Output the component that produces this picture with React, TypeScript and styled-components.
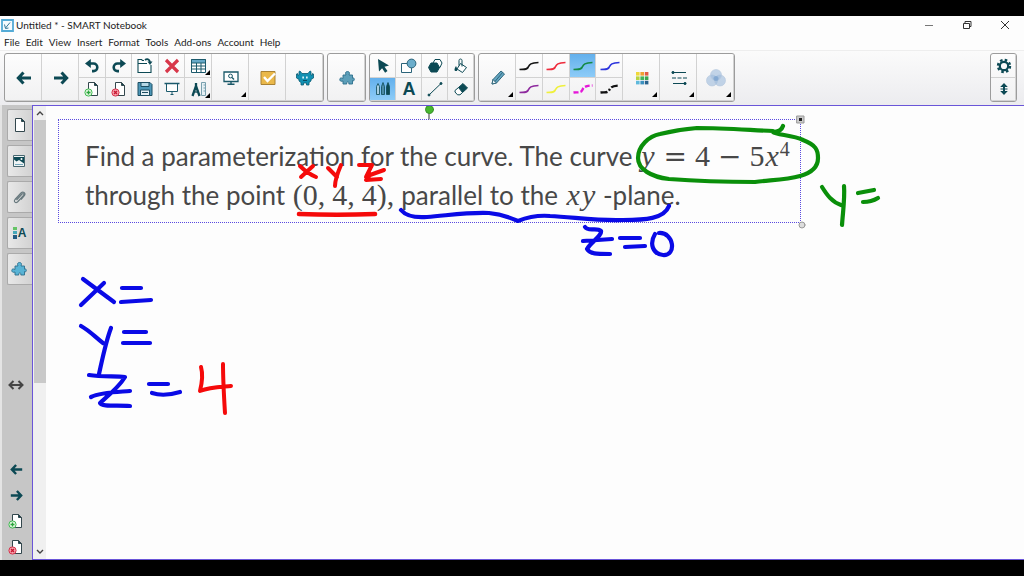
import React from "react";
import styled, { createGlobalStyle } from "styled-components";

const TEAL = "#0c4954";
const BLUE_INK = "#0a0ae6";
const RED_INK = "#f50a0a";
const GREEN_INK = "#0a8f0a";

const GlobalStyle = createGlobalStyle`
  * { box-sizing: border-box; }
  body { margin: 0; background: #000; font-family: Lato, "Open Sans", sans-serif; }
  button { font: inherit; color: inherit; border: 0; padding: 0; background: none; }
  svg { display: block; flex: none; }
`;

const Screen = styled.div`
  display: flex;
  flex-direction: column;
  min-height: 100vh;
  padding: 16px 0;
  background: #000;
`;

const AppWindow = styled.div`
  display: flex;
  flex: 1;
  flex-direction: column;
  background: #fdfdfd;
`;

const TitleBar = styled.header`
  display: flex;
  align-items: center;
  height: 18px;
  padding-left: 1px;
`;

const Title = styled.h1`
  flex: 1;
  margin: 0 0 0 2px;
  font-size: 10px;
  line-height: 18px;
  font-weight: 400;
  color: #222;
`;

const WindowButton = styled.button`
  display: flex;
  align-items: center;
  justify-content: center;
  width: 38px;
  height: 18px;
`;

const MenuBar = styled.nav`
  display: flex;
  gap: 6px;
  height: 17px;
  padding-left: 4px;
  border-bottom: 1px solid #eee;
`;

const MenuItem = styled.button`
  font-size: 10px;
  line-height: 16px;
  color: #222;
`;

const Toolbar = styled.div`
  display: flex;
  gap: 3px;
  padding: 2px 7px 3px 4px;
  background: linear-gradient(#fbfbfb, #ececef);
`;

const Group = styled.div`
  display: flex;
  height: 49px;
  border: 1px solid #9c9c9c;
  border-radius: 3px;
  overflow: hidden;
  background: linear-gradient(#fdfdfd, #f1f1f2);
`;

const Spacer = styled.div<{ $weight?: number }>`
  flex: ${(p) => p.$weight ?? 1};
`;

const ToolButton = styled.button<{ $active?: boolean }>`
  position: relative;
  display: flex;
  align-items: center;
  justify-content: center;
  min-width: 0;
  background: ${(p) => (p.$active ? "linear-gradient(#63b0ec, #8fcdf8)" : "none")};
  box-shadow: inset -1px -1px 0 #d2d2d2;
`;

const LargeTool = styled(ToolButton)`
  width: 37px;
  height: 100%;
`;

const ToolGrid = styled.div<{ $columns: number; $width: number }>`
  display: grid;
  grid-template-columns: repeat(${(p) => p.$columns}, 1fr);
  grid-template-rows: 1fr 1fr;
  width: ${(p) => p.$width}px;
`;

const MoreCorner = styled.i<{ $tight?: boolean }>`
  position: absolute;
  right: ${(p) => (p.$tight ? 2 : 3)}px;
  bottom: ${(p) => (p.$tight ? 3 : 4)}px;
  border-left: 5px solid transparent;
  border-bottom: 5px solid #000;
`;

const Workspace = styled.div`
  display: flex;
  flex: 1;
`;

const SideRail = styled.aside`
  display: flex;
  flex-direction: column;
  width: 32px;
  padding-top: 4px;
  border-left: 2px solid #e4e4e4;
  background: #c6c6c6;
`;

const TabList = styled.div`
  display: flex;
  flex-direction: column;
  gap: 4px;
  padding-left: 5px;
`;

const SideTab = styled.button`
  display: flex;
  align-items: center;
  justify-content: center;
  height: 32px;
  padding-right: 2px;
  border: 1px solid #aaa;
  border-right: 0;
  border-radius: 2px 0 0 2px;
  background: linear-gradient(90deg, #e8e8e8, #d2d2d2);
`;

const RailButton = styled.button`
  display: flex;
  align-items: center;
  justify-content: center;
  height: 26px;
  padding-right: 2px;
`;

const PageArea = styled.main`
  display: flex;
  flex: 1;
  min-width: 0;
  border: 1px solid #6a55d8;
  border-right: 0;
  background: #fdfdfd;
`;

const ScrollTrack = styled.div`
  display: flex;
  flex-direction: column;
  width: 13px;
  background: #f0f0f0;
`;

const ScrollThumb = styled.div`
  flex: 264;
  margin-left: 1px;
  background: #c9c9c9;
`;

const ScrollRest = styled.div`
  flex: 162;
`;

const ScrollButton = styled.button`
  display: flex;
  align-items: center;
  justify-content: center;
  height: 14px;
`;

const Canvas = styled.div`
  position: relative;
  flex: 1;
  min-width: 0;
  padding: 13px 12px;
  overflow: hidden;
`;

const Problem = styled.div`
  width: 743px;
  height: 104px;
  padding: 17px 0 0 26px;
  border: 1px dotted #5a4ae0;
`;

const ProblemText = styled.p`
  margin: 0;
  font-family: Lato, sans-serif;
  font-size: 26px;
  line-height: 39px;
  white-space: nowrap;
  color: #484848;
`;

const MathText = styled.span`
  margin-left: 1px;
  font-family: "Liberation Serif", serif;
  font-size: 30px;
  line-height: 1;

  sup {
    font-size: 20px;
    line-height: 1;
    vertical-align: 10px;
  }
`;

const Operator = styled.span`
  margin: 0 8px;
  font-family: "DejaVu Serif", serif;
  font-size: 28px;
  line-height: 1;
`;

const Comma = styled.span`
  margin-right: 7px;
`;

const Variable = styled.i`
  margin: 0 1px;
`;

const Ink = styled.svg`
  position: absolute;
  top: 0;
  left: 0;
`;

const BackIcon = ({ size = 16, color = TEAL }) => (
  <svg width={size} height={size} viewBox="0 0 16 16" fill="none" stroke={color} strokeWidth="3">
    <path d="M2 8h13M7.500 2.500 2.300 8l5.200 5.500" />
  </svg>
);

const ForwardIcon = ({ size = 16, color = TEAL }) => (
  <svg width={size} height={size} viewBox="0 0 16 16" fill="none" stroke={color} strokeWidth="3">
    <path d="M1 8h13M8.500 2.500 13.700 8l-5.200 5.500" />
  </svg>
);

const UndoIcon = () => (
  <svg width="16" height="16" viewBox="0 0 16 16" fill="none" stroke={TEAL} strokeWidth="2.600">
    <path d="M3 5.500h6.500a3.800 3.800 0 0 1 0 7.600H8" />
    <path d="M6.800 1 1 5.500l5.800 4.500z" fill={TEAL} stroke="none" />
  </svg>
);

const RedoIcon = () => (
  <svg width="16" height="16" viewBox="0 0 16 16" fill="none" stroke={TEAL} strokeWidth="2.600">
    <path d="M13 5.500H6.500a3.800 3.800 0 0 0 0 7.600H8" />
    <path d="m9.200 1 5.800 4.500L9.200 10z" fill={TEAL} stroke="none" />
  </svg>
);

const OpenIcon = () => (
  <svg width="18" height="18" viewBox="0 0 18 18" fill="none" stroke={TEAL} strokeWidth="1.100">
    <path d="M8 3.500H6.500L5.500 2.500H2v13h13V8" fill="#fff" />
    <path d="M2 6.500h9" />
    <path d="M9 3c2-1.500 4.500-1 5 2" strokeWidth="1.800" />
    <path d="M11.500 4.500h5L14 8z" fill={TEAL} stroke="none" />
  </svg>
);

const DeleteIcon = () => (
  <svg width="16" height="16" viewBox="0 0 16 16" fill="none" stroke="#d8374a" strokeWidth="3.200">
    <path d="m2 2 12 12M14 2 2 14" />
  </svg>
);

const TableIcon = () => (
  <svg width="16" height="16" viewBox="0 0 16 16" fill="#fff" stroke="#1c5a6c">
    <path d="M.5 1.500h14v13H.5z" />
    <path d="M.5 1.500h14v3.500H.5z" fill="#67a9c8" />
    <path d="M.5 8h14M.5 11h14M5.500 5v9.500M10 5v9.500" />
  </svg>
);

const PageIcon = ({ badge }: { badge?: "add" | "remove" }) => (
  <svg width="16" height="18" viewBox="0 0 16 18" fill="#fff" stroke="#33474d">
    <path d="M4.500 2.500h6l3 3v10h-9z" />
    <path d="M10.500 2.500v3h3z" fill={TEAL} />
    {badge && (
      <>
        <circle cx="4.500" cy="12.500" r="3.600" fill={badge === "add" ? "#e7f8e4" : "#f6a5ae"} stroke={badge === "add" ? "#3eba50" : "#d72f49"} />
        <path
          d={badge === "add" ? "M4.500 10.500v4M2.500 12.500h4" : "m3 11 3 3M6 11l-3 3"}
          stroke={badge === "add" ? "#2aa53c" : "#c81531"}
          strokeWidth="1.300"
        />
      </>
    )}
  </svg>
);

const SaveIcon = () => (
  <svg width="16" height="16" viewBox="0 0 16 16" fill="#4e97b8" stroke="#1c4e62">
    <path d="M1 1.500h12l2 2v11H1z" />
    <path d="M4 1.500h8v4H4z" fill="#b7d8e6" />
    <path d="M3.500 9h9v5.500h-9z" fill="#e4eff4" />
    <path d="M5 11.500h6" />
  </svg>
);

const ShadeIcon = () => (
  <svg width="16" height="16" viewBox="0 0 16 16" fill="#fff" stroke="#1c5a6c">
    <path d="M2.500 2.500h11v8h-11z" />
    <path d="M.5 2.500h15" strokeWidth="1.600" />
    <path d="M8 10.500V14M6.500 13.500h3" />
  </svg>
);

const MeasureIcon = () => (
  <svg width="18" height="18" viewBox="0 0 18 18" fill="none" stroke={TEAL}>
    <path d="M6 3v3L2.500 16M6 6l3.500 10" strokeWidth="2.300" />
    <path d="M3.500 11c2 1.500 3.500 1.500 5 0" strokeWidth="1.200" />
    <path d="M11.500 2.500h4v13h-4z" fill="#e6f0f4" stroke="#79a0ae" />
    <path d="M13.500 5h2M13.500 8h2M13.500 11h2" stroke="#79a0ae" />
  </svg>
);

const ScreenIcon = () => (
  <svg width="16" height="16" viewBox="0 0 16 16" fill="#fff" stroke="#1a5868">
    <path d="M1 2h14v9.500H1z" strokeWidth="1.300" />
    <circle cx="7.500" cy="6" r="1.900" />
    <path d="m9 7.500 2 2M8 11.500V14M4.500 14.300h7" strokeWidth="1.400" />
  </svg>
);

const CheckIcon = () => (
  <svg width="16" height="16" viewBox="0 0 16 16" fill="#eab84a" stroke="#a98235">
    <path d="M1 1.500h14v13H1z" />
    <path d="m4 7 3.500 4L15 3.500" fill="none" stroke="#fff" strokeWidth="2.400" />
  </svg>
);

const MonsterIcon = () => (
  <svg width="18" height="16" viewBox="0 0 18 16">
    <path
      d="M4 1l2 2.500h6L14 1l1 .5V5h1.500V3.500L17.500 4v4L15 9.500V11l-2 1.500V15h-2.500v-2h-3v2H5v-2.500L3 11V9.500L.5 8V4l1-.5V5H3V1.500z"
      fill="#1290b2"
      stroke="#0a5c74"
      strokeWidth=".8"
    />
    <path d="M6.300 6.500h1.700v2H6.300zM10 6.500h1.700v2H10z" fill="#d8f3fa" />
    <path d="M7 10.500h4" stroke="#084b60" />
  </svg>
);

const PuzzleIcon = ({ fill = "#5d9fb9" }) => (
  <svg width="16" height="16" viewBox="0 0 16 16" fill={fill} stroke="#2c6f8d" strokeWidth=".9">
    <path d="M4 5h3C6 3 6.500 1.500 8.500 1.500S11 3 10 5h3.500v3.200c1.500-.7 1.800.3 1.800 1.300s-.8 1.800-1.800 1v3.500H9.800c.5-1.500-.3-2-1-2s-1.600.5-1 2H4v-3c-2 .8-3.200 0-3.200-1.600S2.300 7.500 4 8.500z" />
  </svg>
);

const SelectIcon = () => (
  <svg width="16" height="16" viewBox="0 0 16 16" fill={TEAL}>
    <path d="m3 1 11 6.500-4.500 1.200 3 4.300-2.400 1.800-3-4.500L4 13.500z" />
  </svg>
);

const ShapesIcon = () => (
  <svg width="18" height="16" viewBox="0 0 18 16" stroke="#2a6379">
    <path d="M1.500 5.500h10v9h-10z" fill="#fff" />
    <circle cx="11.500" cy="5.500" r="4.400" fill="#6badcb" />
  </svg>
);

const PolygonIcon = () => (
  <svg width="16" height="16" viewBox="0 0 16 16" stroke={TEAL}>
    <path d="M8 1.500h5l2 3.500-2 4.500H8L6 5z" fill="#fff" />
    <path d="M4 5h6l2.500 4.500L10 14H4L1.500 9.500z" fill={TEAL} />
  </svg>
);

const FillIcon = () => (
  <svg width="16" height="16" viewBox="0 0 16 16" fill="#fff" stroke={TEAL}>
    <path d="m7.500 5.500 6 4-4 5-5.500-3.500z" />
    <path d="M6 7.500V2.500c0-2 3-2 3 0v6" fill="none" />
    <path d="M3 8c-2 3-2 5 0 5s1.500-2 0-5z" fill={TEAL} stroke="none" />
  </svg>
);

const PensIcon = () => (
  <svg width="18" height="16" viewBox="0 0 18 16" stroke={TEAL} strokeWidth=".8">
    <path d="M2.500 5.500 4 2.500l1.500 3v8h-3z" fill="#a7cfe4" />
    <path d="M7.500 5.500 9 1.500l1.500 4v8h-3z" fill="#4c8aa5" />
    <path d="m12.500 5.500 1.500-4 1.500 4v8h-3z" fill={TEAL} />
  </svg>
);

const TextGlyph = styled.span<{ $size: number }>`
  font-family: "Liberation Sans", sans-serif;
  font-size: ${(p) => p.$size}px;
  line-height: 1;
  font-weight: 700;
  color: ${TEAL};
`;

const LineIcon = () => (
  <svg width="16" height="16" viewBox="0 0 16 16" stroke={TEAL} fill={TEAL}>
    <path d="M2 14 14 2.500" strokeWidth="1" />
    <circle cx="2" cy="14" r="1" />
    <circle cx="14" cy="2.500" r="1" />
  </svg>
);

const EraserIcon = () => (
  <svg width="16" height="16" viewBox="0 0 16 16" stroke={TEAL}>
    <path d="m5.500 6.500 4.500-4 4.500 4.500-5 4.500z" fill={TEAL} />
    <path d="m5.500 6.500 4 5-2.500 2.300H4.500L2 11V9.500z" fill="#fff" />
  </svg>
);

const PenIcon = () => (
  <svg width="16" height="18" viewBox="0 0 16 18" stroke="#31677b">
    <path d="m2 15 1-4.500L11 2l3.500 3-8 9z" fill="#62a5c2" />
    <path d="m2 15 1-4.500L6.500 14z" fill="#eef5f8" />
    <path d="M5 12.500 12.500 3.500" fill="none" />
  </svg>
);

const StrokeIcon = ({ color, dash }: { color: string; dash?: string }) => (
  <svg width="22" height="12" viewBox="0 0 22 12" fill="none" stroke={color} strokeWidth={dash ? 2.4 : 1.7} strokeDasharray={dash}>
    <path d="M1.500 9.500c4-.5 7 .7 8.500-2s2-4.800 10.500-5" />
  </svg>
);

const PaletteIcon = () => (
  <svg width="14" height="14" viewBox="0 0 14 14">
    {["#f0d83a", "#efa032", "#e15b45", "#b8d440", "#42b35a", "#3aa64e", "#5fb9dc", "#3b90bf", "#28618c"].map((fill, i) => (
      <rect key={fill} x={1 + (i % 3) * 4.400} y={1 + Math.floor(i / 3) * 4.400} width="3.600" height="3.600" fill={fill} />
    ))}
  </svg>
);

const LineStyleIcon = () => (
  <svg width="18" height="16" viewBox="0 0 18 16" stroke={TEAL} fill={TEAL}>
    <path d="M2 2.500h14M3 13.500h13" strokeWidth="1.200" />
    <path d="M2 8h15" strokeDasharray="4 1.500" />
    <circle cx="3" cy="2.500" r="1.100" />
    <circle cx="15" cy="13.500" r="1.100" />
  </svg>
);

const TransparencyIcon = () => (
  <svg width="22" height="20" viewBox="0 0 22 20" fill="#9dbbdc" fillOpacity=".6" stroke="#b5c8de" strokeWidth=".6">
    <circle cx="7" cy="12.500" r="5.500" />
    <circle cx="15" cy="12.500" r="5.500" />
    <circle cx="11" cy="7" r="5.500" />
    <circle cx="11" cy="10.500" r="2.500" fill="#6f9bcb" stroke="none" />
  </svg>
);

const GearIcon = () => (
  <svg width="16" height="16" viewBox="0 0 16 16" fill="none" stroke={TEAL}>
    <circle cx="8" cy="8" r="4.200" strokeWidth="2.200" />
    <circle cx="8" cy="8" r="6" strokeWidth="2.400" strokeDasharray="2.500 2.212" />
  </svg>
);

const VerticalIcon = () => (
  <svg width="12" height="14" viewBox="0 0 12 14" fill={TEAL}>
    <path d="m6 1 3.800 4H7v1.500H5V5H2.200zM6 13l3.800-4H7V7.500H5V9H2.200zM2.500 6.500h7v1h-7z" />
  </svg>
);

const WidthIcon = () => (
  <svg width="16" height="12" viewBox="0 0 16 12" fill="none" stroke="#444" strokeWidth="2">
    <path d="M2 6h12M5.500 2 1.500 6l4 4M10.500 2l4 4-4 4" />
  </svg>
);

const PictureIcon = () => (
  <svg width="14" height="14" viewBox="0 0 14 14">
    <path d="M1.500 1.500h11v11h-11z" fill="#eef3f4" stroke="#46666f" />
    <path d="M2 3h10v6.500L7 6 4.500 7.500 2 5.500z" fill={TEAL} />
    <circle cx="9.500" cy="5" r="1" fill="#fff" />
    <path d="M3 10.500h8" stroke="#77a9bb" />
  </svg>
);

const ClipIcon = () => (
  <svg width="14" height="14" viewBox="0 0 14 14" fill="none" stroke="#68797e" strokeWidth="1.200">
    <path d="m4.500 10 5.500-6c1.500-1 2.500.3 1.500 1.500l-6 6.500c-2 1.500-4-.5-2.500-2.500l6-6.500c2-2 5-.2 3.500 2.500L9 9.500" />
  </svg>
);

const TextPropsIcon = () => (
  <svg width="6" height="14" viewBox="0 0 6 14">
    <path d="M1 1h4v3H1z" fill="#65c466" />
    <path d="M1 5h4v3H1z" fill="#47a9b9" />
    <path d="M1 9h4v4H1z" fill="#245b82" />
  </svg>
);

const ChevronIcon = ({ down }: { down?: boolean }) => (
  <svg width="8" height="6" viewBox="0 0 8 6" fill="none" stroke="#444" strokeWidth="1.400">
    <path d={down ? "m1 1 3 3 3-3" : "m1 5 3-3 3 3"} />
  </svg>
);

const LogoIcon = () => (
  <svg width="13" height="13" viewBox="0 0 13 13">
    <path d="M1 1h11v11H1z" fill="#f5fbfe" stroke="#54abd6" strokeWidth="1.800" />
    <path d="M4.500 9 9 3.500M3.500 5.500l1 4 3-.5" stroke="#357796" fill="none" />
  </svg>
);

const MENUS = ["File", "Edit", "View", "Insert", "Format", "Tools", "Add-ons", "Account", "Help"];

type Tool = { label: string; icon: React.ReactNode; active?: boolean; more?: boolean };

const PAGE_TOOLS: Tool[] = [
  { label: "Undo", icon: <UndoIcon /> },
  { label: "Redo", icon: <RedoIcon /> },
  { label: "Open", icon: <OpenIcon /> },
  { label: "Delete", icon: <DeleteIcon /> },
  { label: "Table", icon: <TableIcon />, more: true },
  { label: "Add page", icon: <PageIcon badge="add" /> },
  { label: "Delete page", icon: <PageIcon badge="remove" /> },
  { label: "Save", icon: <SaveIcon /> },
  { label: "Screen shade", icon: <ShadeIcon /> },
  { label: "Measurement tools", icon: <MeasureIcon />, more: true },
];

const DRAW_TOOLS: Tool[] = [
  { label: "Select", icon: <SelectIcon /> },
  { label: "Shapes", icon: <ShapesIcon /> },
  { label: "Regular polygons", icon: <PolygonIcon /> },
  { label: "Fill", icon: <FillIcon /> },
  { label: "Pens", icon: <PensIcon />, active: true },
  { label: "Text", icon: <TextGlyph $size={18}>A</TextGlyph> },
  { label: "Lines", icon: <LineIcon /> },
  { label: "Eraser", icon: <EraserIcon /> },
];

const PEN_STYLES: Tool[] = [
  { label: "Black pen", icon: <StrokeIcon color="#161616" /> },
  { label: "Red pen", icon: <StrokeIcon color="#ee2c3c" /> },
  { label: "Green pen", icon: <StrokeIcon color="#158a46" />, active: true },
  { label: "Blue pen", icon: <StrokeIcon color="#2d35dd" /> },
  { label: "Purple pen", icon: <StrokeIcon color="#8e2a9e" /> },
  { label: "Yellow pen", icon: <StrokeIcon color="#eff03c" /> },
  { label: "Dashed magenta pen", icon: <StrokeIcon color="#e516d8" dash="5 2" /> },
  { label: "Dashed black pen", icon: <StrokeIcon color="#111" dash="7 2 2 2" /> },
];

const ToolSet = ({ tools, width }: { tools: Tool[]; width: number }) => (
  <ToolGrid $columns={tools.length / 2} $width={width}>
    {tools.map((tool) => (
      <ToolButton key={tool.label} aria-label={tool.label} $active={tool.active}>
        {tool.icon}
        {tool.more && <MoreCorner $tight />}
      </ToolButton>
    ))}
  </ToolGrid>
);

const SettingsColumn = styled.div`
  display: grid;
  grid-template-rows: 1fr 1fr;
  width: 25px;
`;

const InkLayer = () => (
  <Ink width="978" height="454" viewBox="46 106 978 454" fill="none" strokeLinecap="round" strokeLinejoin="round" aria-hidden="true">
    <path d="M429 110v9" stroke="#333" />
    <circle cx="429.500" cy="109.500" r="4" fill="#46b82e" stroke="#3b8e2c" />
    <path d="M797 116h7v7h-7z" fill="#ccc" stroke="#999" />
    <path d="M799 118h3v3h-3z" fill="#222" />
    <circle cx="802" cy="225" r="3" fill="#ddd" stroke="#999" />

    <g stroke={GREEN_INK} strokeWidth="4.200">
      <path d="M783 126c-1 3-4 6-10 6 3 3 20 3 30 8 13 5 15 10 15 18 0 9-7 15-18 18-14 4-30 4-45 6-28 0-60-1-86-3-18-2-31-10-31-21 0-12 11-22 22-24 12-3 25-5 37-6 26 0 52 2 76 3" />
      <path d="M822 187c5 8 10 15 19 18M844 186c1 12-1 25-2 39M858 193l16-3M863 202c5 0 10-1 15-4" />
    </g>

    <g stroke={RED_INK} strokeWidth="4">
      <path d="M300 166c5 5 9 8 16 11M313 166l-12 11M328 168l9 9M341 165c-3 7-6 14-6 21M359 165l13 0-6 12M384 170l-14 5-4 5 15-1" />
      <path d="M299 214c26 1 50 1 76 0" strokeWidth="4.600" />
      <path d="M201 367c2 7 1 16-1 24 10-4 20-4 31-5M223 364c0 16 1 33 2 49" />
    </g>

    <g stroke={BLUE_INK} strokeWidth="4.200">
      <path d="M401 210c5 6 13 8 26 7 24-2 43-5 62-4 11 1 20 4 29 8 10-4 20-6 32-5 23 1 47 5 73 4 22 0 41-1 46-14" />
      <path d="M585 227c3 5 12 0 16 4 1 5-10 11-14 18 3 5 9 5 23 5M583 241l29-2M620 238l20 0M625 247l20-1M655 234c-6 10-2 20 8 21 14 1 11-23-4-22" />
      <path d="M83 279 114 302M104 283 81 305M122 288l19 0M121 302l30-2M81 326c9 5 14 11 22 17M111 328c-5 13-8 28-12 46M124 332h22M123 343h27M89 375c13 2 26 1 36 2-6 10-16 18-25 26 2 4 17 2 30 3M91 397c10-5 26-5 39-6M149 384h19M152 393c9 3 18 2 28-1" />
    </g>
  </Ink>
);

export default function App() {
  return (
    <Screen>
      <GlobalStyle />
      <AppWindow>
        <TitleBar>
          <LogoIcon />
          <Title>Untitled * - SMART Notebook</Title>
          <WindowButton aria-label="Minimize">
            <svg width="10" height="10" stroke="#777"><path d="M1 5.500h8" /></svg>
          </WindowButton>
          <WindowButton aria-label="Restore">
            <svg width="10" height="10" fill="none" stroke="#333"><path d="M1.500 3.500h6v5h-6zM3 3.500v-2h6v5H7.500" /></svg>
          </WindowButton>
          <WindowButton aria-label="Close">
            <svg width="10" height="10" stroke="#333"><path d="m1 1 8 8M9 1 1 9" /></svg>
          </WindowButton>
        </TitleBar>
        <MenuBar aria-label="Main menu">
          {MENUS.map((menu) => <MenuItem key={menu}>{menu}</MenuItem>)}
        </MenuBar>

        <Toolbar>
          <Group>
            <LargeTool aria-label="Previous page"><BackIcon /></LargeTool>
            <LargeTool aria-label="Next page"><ForwardIcon /></LargeTool>
            <ToolSet tools={PAGE_TOOLS} width={133} />
            <LargeTool aria-label="View screens"><ScreenIcon /><MoreCorner /></LargeTool>
            <LargeTool aria-label="Response"><CheckIcon /></LargeTool>
            <LargeTool aria-label="Activity builder"><MonsterIcon /></LargeTool>
          </Group>
          <Group>
            <LargeTool aria-label="Add-ons toolbar"><PuzzleIcon /></LargeTool>
          </Group>
          <Group>
            <ToolSet tools={DRAW_TOOLS} width={104} />
          </Group>
          <Group>
            <LargeTool aria-label="Pen type"><PenIcon /><MoreCorner /></LargeTool>
            <ToolSet tools={PEN_STYLES} width={107} />
            <LargeTool aria-label="Color"><PaletteIcon /><MoreCorner /></LargeTool>
            <LargeTool aria-label="Line style"><LineStyleIcon /><MoreCorner /></LargeTool>
            <LargeTool aria-label="Transparency"><TransparencyIcon /><MoreCorner /></LargeTool>
          </Group>
          <Spacer />
          <Group>
            <SettingsColumn>
              <ToolButton aria-label="Customize toolbar"><GearIcon /></ToolButton>
              <ToolButton aria-label="Move toolbar"><VerticalIcon /></ToolButton>
            </SettingsColumn>
          </Group>
        </Toolbar>

        <Workspace>
          <SideRail>
            <TabList>
              <SideTab aria-label="Page sorter"><PageIcon /></SideTab>
              <SideTab aria-label="Gallery"><PictureIcon /></SideTab>
              <SideTab aria-label="Attachments"><ClipIcon /></SideTab>
              <SideTab aria-label="Properties"><TextPropsIcon /><TextGlyph $size={12}>A</TextGlyph></SideTab>
              <SideTab aria-label="Add-ons tab"><PuzzleIcon fill="#58b3d5" /></SideTab>
            </TabList>
            <Spacer $weight={3} />
            <RailButton aria-label="Move sidebar"><WidthIcon /></RailButton>
            <Spacer $weight={2} />
            <RailButton aria-label="Previous"><BackIcon size={13} /></RailButton>
            <RailButton aria-label="Next"><ForwardIcon size={13} /></RailButton>
            <RailButton aria-label="Insert page"><PageIcon badge="add" /></RailButton>
            <RailButton aria-label="Remove page"><PageIcon badge="remove" /></RailButton>
          </SideRail>
          <PageArea>
            <ScrollTrack>
              <ScrollButton aria-label="Scroll up"><ChevronIcon /></ScrollButton>
              <ScrollThumb />
              <ScrollRest />
              <ScrollButton aria-label="Scroll down"><ChevronIcon down /></ScrollButton>
            </ScrollTrack>
            <Canvas>
              <Problem>
                <ProblemText>
                  Find a parameterization for the curve. The curve{" "}
                  <MathText>
                    <Variable>y</Variable><Operator>=</Operator>4<Operator>−</Operator>5<Variable>x</Variable><sup>4</sup>
                  </MathText>
                </ProblemText>
                <ProblemText>
                  through the point{" "}
                  <MathText>
                    (0<Comma>,</Comma>4<Comma>,</Comma>4)<Comma>,</Comma>
                  </MathText>
                  parallel to the <MathText><Variable>x</Variable><Variable>y</Variable></MathText> -plane.
                </ProblemText>
              </Problem>
              <InkLayer />
            </Canvas>
          </PageArea>
        </Workspace>
      </AppWindow>
    </Screen>
  );
}
